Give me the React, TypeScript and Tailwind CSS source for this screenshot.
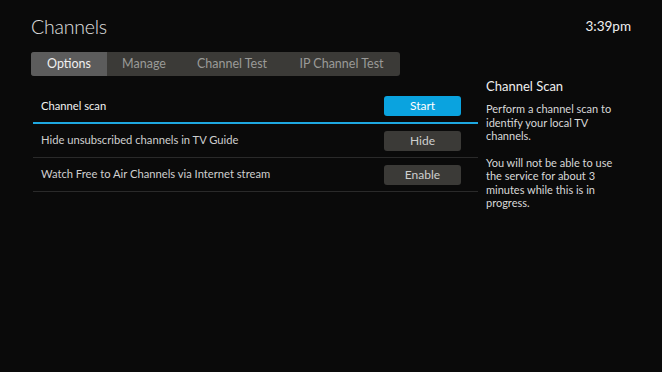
import React from 'react'

const tabs = ['Options', 'Manage', 'Channel Test', 'IP Channel Test']

const rows = [
  { label: 'Channel scan', action: 'Start', focused: true },
  { label: 'Hide unsubscribed channels in TV Guide', action: 'Hide', focused: false },
  { label: 'Watch Free to Air Channels via Internet stream', action: 'Enable', focused: false },
]

export default function App() {
  return (
    <div
      className="w-[662px] h-[372px] bg-[#0a0a0a] text-[#e6e6e6] overflow-hidden"
      style={{ fontFamily: 'Lato, "Open Sans", "Liberation Sans", sans-serif' }}
    >
      {/* Header */}
      <div className="flex items-start justify-between pl-[31px] pr-[31px] pt-[14px]">
        <h1 className="text-[19.5px] leading-[26px] font-light tracking-[-0.2px] text-[#e0e0e0]">Channels</h1>
        <div className="text-[13.5px] leading-[18px] mt-[3px] text-[#f0f0f0]">3:39pm</div>
      </div>

      {/* Tabs */}
      <div className="ml-[31px] mt-[12px] w-[369px] h-[24px] flex rounded-[3px] bg-[#3b3a37] overflow-hidden text-[12.5px]">
        {tabs.map((t, i) => (
          <div
            key={t}
            className={
              i === 0
                ? 'w-[76px] flex items-center justify-center bg-[#5c5c5c] text-[#f0f0f0]'
                : i === 1
                  ? 'w-[74px] flex items-center justify-center text-[#9a9a98]'
                  : i === 2
                    ? 'w-[102px] flex items-center justify-center text-[#9a9a98]'
                    : 'w-[117px] flex items-center justify-center text-[#9a9a98]'
            }
          >
            {t}
          </div>
        ))}
      </div>

      <div className="flex mt-[14px]">
        {/* Rows */}
        <div className="ml-[33px] w-[445px]">
          {rows.map((r) => (
            <div
              key={r.label}
              className={
                r.focused
                  ? 'h-[34px] flex items-center justify-between pl-[8px] pr-[17px] border-b-2 border-[#1ea8e1]'
                  : 'h-[34px] flex items-center justify-between pl-[8px] pr-[17px] border-b border-[#2a2a2a]'
              }
            >
              <span className={r.focused ? 'text-[11.2px] text-[#f2f2f2]' : 'text-[11.2px] text-[#cfcfcf]'}>
                {r.label}
              </span>
              <button
                className={
                  r.focused
                    ? 'w-[77px] h-[20px] rounded-[3px] bg-[#0aa3df] text-white text-[12px] leading-[20px]'
                    : 'w-[77px] h-[20px] rounded-[3px] bg-[#3b3a37] text-[#cfcfcf] text-[12px] leading-[20px]'
                }
              >
                {r.action}
              </button>
            </div>
          ))}
        </div>

        {/* Help panel */}
        <div className="ml-[8px] w-[130px] -mt-[12px]">
          <h2 className="text-[13px] leading-[16px] whitespace-nowrap text-[#f0f0f0]">Channel Scan</h2>
          <p className="mt-[8px] text-[11px] leading-[13.5px] text-[#d8d8d8]">
            Perform a channel scan to identify your local TV channels.
          </p>
          <p className="mt-[13px] text-[11px] leading-[13.5px] text-[#d8d8d8]">
            You will not be able to use the service for about 3 minutes while this is in progress.
          </p>
        </div>
      </div>
    </div>
  )
}
